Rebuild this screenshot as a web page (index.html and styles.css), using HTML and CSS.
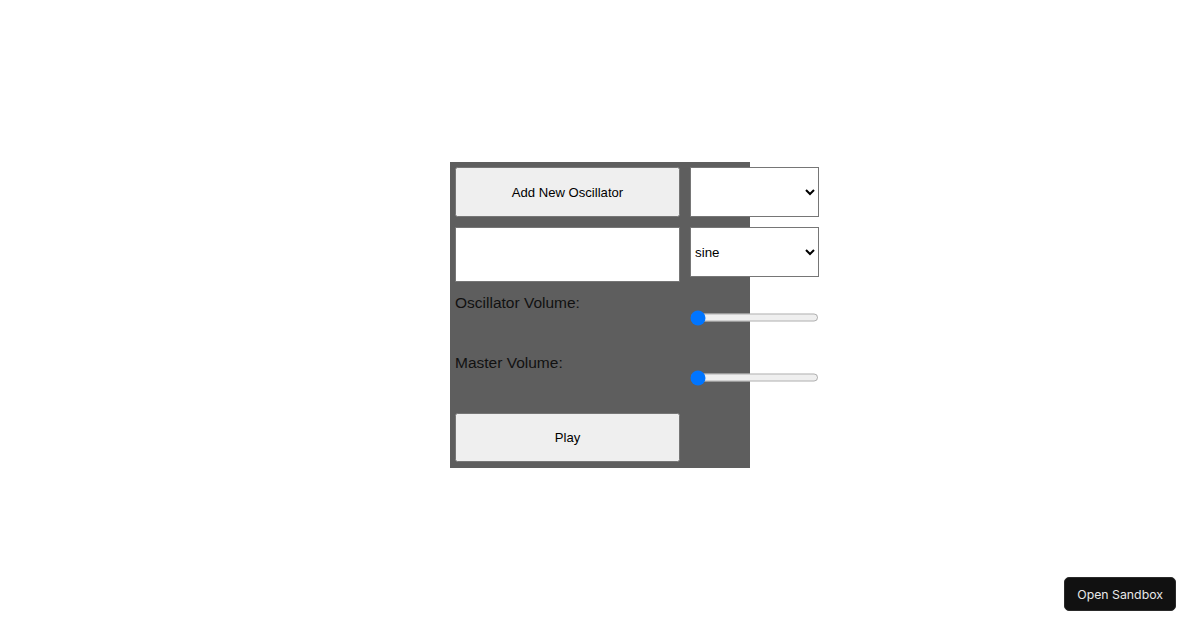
FILE: index.html
```html
<!DOCTYPE html>
<html>
<head>
<meta charset="utf-8">
<link rel="stylesheet" href="styles.css">
</head>
<body>
<div class="synth">
  <button class="btn">Add New Oscillator</button>
  <select class="sel"></select>
  <input class="name" type="text">
  <select class="sel">
    <option>sine</option>
    <option>square</option>
    <option>sawtooth</option>
    <option>triangle</option>
  </select>
  <label class="lbl">Oscillator Volume:</label>
  <input class="range" type="range" min="0" max="1" step="0.01" value="0">
  <label class="lbl">Master Volume:</label>
  <input class="range" type="range" min="0" max="1" step="0.01" value="0">
  <button class="btn btn-play">Play</button>
</div>
<button class="sandbox">Open Sandbox</button>
</body>
</html>
```
FILE: styles.css
```css
html, body {
  margin: 0;
  padding: 0;
  background: #ffffff;
}
body {
  min-height: 100vh;
  display: flex;
  align-items: center;
  justify-content: center;
  font-family: "Liberation Sans", Arial, sans-serif;
}
.synth {
  box-sizing: border-box;
  width: 300px;
  height: 306px;
  padding: 5px;
  background: #5e5e5e;
  display: grid;
  grid-template-columns: 225px 129px;
  grid-template-rows: 50px 55px 50px 50px 50px;
  gap: 10px;
  justify-content: start;
  align-content: start;
}
.btn {
  margin: 0;
  font-family: "Liberation Sans", Arial, sans-serif;
  font-size: 13.1px;
  color: #000;
}
.btn-play {
  margin-top: 1px;
}
.sel {
  margin: 0;
  height: 50px;
  font-family: "Liberation Sans", Arial, sans-serif;
  font-size: 13.333px;
  background: #fff;
  color: #000;
}
.name {
  margin: 0;
  box-sizing: border-box;
  background: #fff;
  border: 1px solid #767676;
}
.lbl {
  font-size: 15.5px;
  color: #111;
  line-height: 18px;
  padding-top: 2px;
}
.range {
  margin: 0;
  margin-top: 1px;
  width: 129px;
}
.sandbox {
  position: fixed;
  right: 24px;
  bottom: 19px;
  height: 34px;
  padding: 0 12px;
  border: 1px solid #2a2a2a;
  border-radius: 5px;
  background: #111111;
  color: #e8e8e8;
  font-family: Inter, "Liberation Sans", sans-serif;
  font-size: 12.3px;
}
```
